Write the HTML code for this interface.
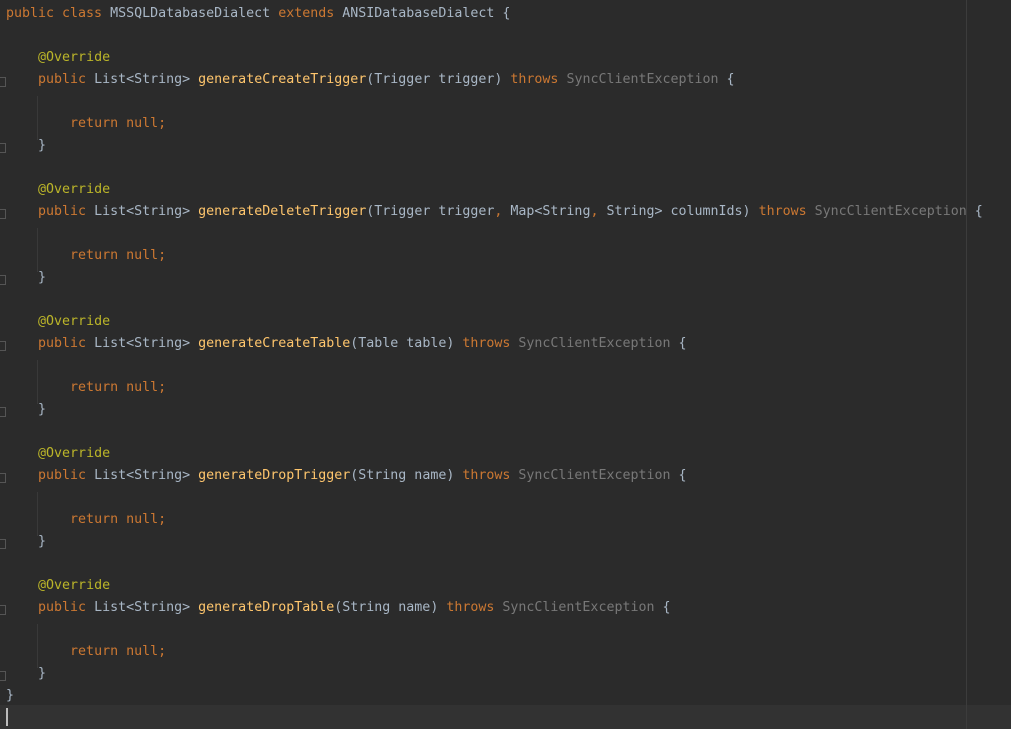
<!DOCTYPE html>
<html><head><meta charset="utf-8"><style>
html,body{margin:0;padding:0;background:#2b2b2b;width:1011px;height:729px;overflow:hidden}
.ed{position:relative;width:1011px;height:729px}
pre{position:absolute;left:6px;top:3px;margin:0;font-family:"DejaVu Sans Mono","Liberation Mono",monospace;font-size:13.3px;line-height:22px;color:#a9b7c6}
.k{color:#cc7832}.m{color:#ffc66d}.a{color:#bbb529}.g{color:#787878}
.margin{position:absolute;left:966px;top:0;width:1px;height:729px;background:#3c3c3c}
.cur{position:absolute;left:0;top:705px;width:1011px;height:24px;background:#323232}
.caret{position:absolute;left:6px;top:708px;width:2px;height:18px;background:#bbbbbb}
.ig{position:absolute;left:37px;width:1px;background:#393939}
.fold{position:absolute;left:0;width:5px;height:8px;border:1px solid #555;border-left:none}
</style></head><body><div class="ed">
<div class="cur"></div>
<div class="margin"></div>
<div class="ig" style="top:96px;height:44px"></div>
<div class="ig" style="top:228px;height:44px"></div>
<div class="ig" style="top:360px;height:44px"></div>
<div class="ig" style="top:492px;height:44px"></div>
<div class="ig" style="top:624px;height:44px"></div>
<div class="fold" style="top:77px"></div><div class="fold" style="top:143px"></div>
<div class="fold" style="top:209px"></div><div class="fold" style="top:275px"></div>
<div class="fold" style="top:341px"></div><div class="fold" style="top:407px"></div>
<div class="fold" style="top:473px"></div><div class="fold" style="top:539px"></div>
<div class="fold" style="top:605px"></div><div class="fold" style="top:671px"></div>
<pre><span class="k">public class </span>MSSQLDatabaseDialect <span class="k">extends </span>ANSIDatabaseDialect {

    <span class="a">@Override</span>
    <span class="k">public </span>List&lt;String&gt; <span class="m">generateCreateTrigger</span>(Trigger trigger) <span class="k">throws </span><span class="g">SyncClientException</span> {

        <span class="k">return null;</span>
    }

    <span class="a">@Override</span>
    <span class="k">public </span>List&lt;String&gt; <span class="m">generateDeleteTrigger</span>(Trigger trigger<span class="k">, </span>Map&lt;String<span class="k">, </span>String&gt; columnIds) <span class="k">throws </span><span class="g">SyncClientException</span> {

        <span class="k">return null;</span>
    }

    <span class="a">@Override</span>
    <span class="k">public </span>List&lt;String&gt; <span class="m">generateCreateTable</span>(Table table) <span class="k">throws </span><span class="g">SyncClientException</span> {

        <span class="k">return null;</span>
    }

    <span class="a">@Override</span>
    <span class="k">public </span>List&lt;String&gt; <span class="m">generateDropTrigger</span>(String name) <span class="k">throws </span><span class="g">SyncClientException</span> {

        <span class="k">return null;</span>
    }

    <span class="a">@Override</span>
    <span class="k">public </span>List&lt;String&gt; <span class="m">generateDropTable</span>(String name) <span class="k">throws </span><span class="g">SyncClientException</span> {

        <span class="k">return null;</span>
    }
}
</pre>
<div class="caret"></div>
</div></body></html>
